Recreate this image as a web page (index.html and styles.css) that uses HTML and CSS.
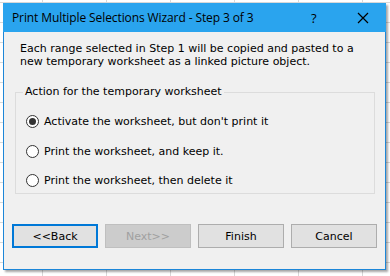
FILE: index.html
```html
<!DOCTYPE html>
<html>
<head>
<meta charset="utf-8">
<link rel="stylesheet" href="styles.css">
</head>
<body>
<div class="dialog">
  <div class="titlebar">
    <span class="title">Print Multiple Selections Wizard - Step 3 of 3</span>
    <span class="help">?</span>
    <svg class="close" width="12" height="12" viewBox="0 0 12 12"><path d="M1 1 L11 11 M11 1 L1 11" stroke="#000" stroke-width="1.2" fill="none"/></svg>
  </div>
  <div class="content">
    <p class="intro">Each range selected in Step 1 will be copied and pasted to a<br>new temporary worksheet as a linked picture object.</p>
    <fieldset class="group">
      <legend>Action for the temporary worksheet</legend>
      <div class="option"><span class="radio checked"></span><span>Activate the worksheet, but don't print it</span></div>
      <div class="option"><span class="radio"></span><span>Print the worksheet, and keep it.</span></div>
      <div class="option"><span class="radio"></span><span>Print the worksheet, then delete it</span></div>
    </fieldset>
    <div class="buttons">
      <button class="btn default">&lt;&lt;Back</button>
      <button class="btn disabled">Next&gt;&gt;</button>
      <button class="btn">Finish</button>
      <button class="btn">Cancel</button>
    </div>
  </div>
</div>
</body>
</html>
```
FILE: styles.css
```css
html, body {
  margin: 0;
  padding: 0;
}
body {
  width: 390px;
  height: 276px;
  overflow: hidden;
  background-color: #ffffff;
  background-image:
    repeating-linear-gradient(to right, transparent 0, transparent 43px, #d8d8d8 43px, #d8d8d8 44px, transparent 44px, transparent 64px),
    repeating-linear-gradient(to bottom, transparent 0, transparent 2px, #d8d8d8 2px, #d8d8d8 3px, transparent 3px, transparent 20px);
  background-size: 64px 100%, 100% 20px;
  background-position: -65px 0, 0 0;
  padding-top: 3px;
  padding-left: 3px;
  box-sizing: border-box;
  font-family: "DejaVu Sans", Tahoma, sans-serif;
}
.dialog {
  width: 383px;
  height: 267px;
  box-sizing: border-box;
  border: 1px solid #1c86d8;
  border-top: none;
  background: #f0f0f0;
  box-shadow: 2px 2px 2px rgba(0, 0, 0, 0.35);
  display: flex;
  flex-direction: column;
}
.titlebar {
  height: 29px;
  margin: 0 -1px;
  background: #2aa4ee;
  display: flex;
  align-items: center;
  padding-left: 9px;
  font-family: "Open Sans", "Segoe UI", sans-serif;
  font-size: 12px;
  color: #000;
}
.title {
  flex: 1;
  letter-spacing: -0.1px;
}
.help {
  width: 10px;
  margin-right: 36px;
  font-size: 13px;
}
.close {
  margin-right: 17px;
}
.content {
  padding: 10px 0 0 11px;
  font-size: 11px;
  color: #000;
}
.intro {
  margin: 0 0 0 5px;
  line-height: 13px;
}
.group {
  margin: 17px 0 0 0;
  width: 360px;
  height: 109px;
  box-sizing: border-box;
  border: 1px solid #dcdcdc;
  padding: 8px 0 0 10px;
}
.group legend {
  padding: 0 2px;
  margin-left: -3px;
  line-height: 14px;
}
.option {
  display: flex;
  align-items: center;
  height: 29.5px;
}
.radio {
  width: 13px;
  height: 13px;
  box-sizing: border-box;
  border: 1px solid #333;
  border-radius: 50%;
  background: #fff;
  margin-right: 5px;
  display: flex;
  align-items: center;
  justify-content: center;
}
.radio.checked::after {
  content: "";
  width: 7px;
  height: 7px;
  border-radius: 50%;
  background: #333;
}
.buttons {
  display: flex;
  gap: 7px;
  margin-top: 30px;
  margin-left: -3px;
}
.btn {
  width: 86px;
  height: 24px;
  box-sizing: border-box;
  border: 1px solid #adadad;
  background: #e1e1e1;
  font-family: "DejaVu Sans", Tahoma, sans-serif;
  font-size: 11px;
  color: #000;
  padding: 0;
}
.btn.default {
  border: 2px solid #0078d7;
}
.btn.disabled {
  background: #cccccc;
  border-color: #bfbfbf;
  color: #a0a0a0;
}
```
